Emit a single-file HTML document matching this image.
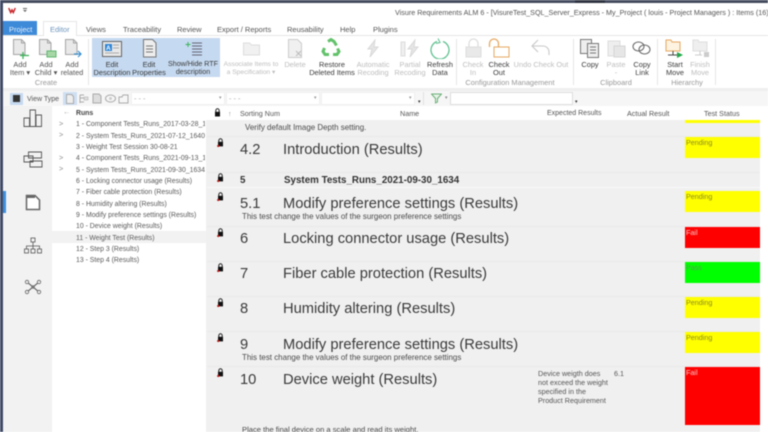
<!DOCTYPE html>
<html><head><meta charset="utf-8"><style>
html,body{margin:0;padding:0;background:#fff}
#p{position:relative;width:768px;height:432px;overflow:hidden;background:#fff;font-family:"Liberation Sans",sans-serif;color:#555;filter:blur(.45px)}
#p div,#p svg{position:absolute}
.t{white-space:nowrap;font-size:7.4px;line-height:7.5px}
.c{text-align:center;transform:translateX(-50%)}
.g{color:#bdbdbd}
.d{color:#3a3a3a}
.tab{font-size:7.5px;top:25px;color:#555;white-space:nowrap}
.tr{font-size:6.9px;left:76px;color:#5a5a5a;white-space:nowrap;margin-top:2px}
.n{font-size:14.7px;color:#3a3a3a;white-space:nowrap;left:240px;margin-top:1.5px}
.h{font-size:14.7px;color:#3a3a3a;white-space:nowrap;left:283px;margin-top:1.5px}
.s{left:685px;width:75px;font-size:7.2px;line-height:11px;text-indent:1px}
.sm{font-size:7.95px;color:#4a4a4a;white-space:nowrap}
.hd{font-size:7.2px;line-height:9px;color:#555;top:109px;white-space:nowrap}
.sep{background:#e6e6e6;width:1px;top:39px;height:46px}
.r{left:207px;width:553px;height:1px;background:#eaeaea}
.lk{left:217px;width:7px;height:9px}
</style></head><body><div id="p">
<svg width="0" height="0" style="position:absolute"><defs>
<g id="lock"><path d="M1.8 4V2.500a1.700 1.700 0 0 1 3.400 0V4" fill="none" stroke="#222" stroke-width="1"/><rect x="1" y="3.800" width="5" height="4.600" fill="#111"/><circle cx="1.200" cy="8" r="1.100" fill="#c01515"/></g>
<g id="doc"><path d="M.5.500h8l3.500 3.500v11.500H.5z" fill="#e9e9e9" stroke="#a5a5a5"/><path d="M8.500.5V4H12" fill="none" stroke="#a5a5a5"/></g>
</defs></svg>

<div style="left:0;top:0;width:768px;height:3px;background:#444b5f"></div>
<div style="left:575px;top:0;width:30px;height:3px;background:#2f3440"></div>
<div style="left:0;top:0;width:3px;height:432px;background:#3f4a66"></div>
<svg style="left:8px;top:7px" width="8" height="7"><path d="M.7 1l2 4.500 1.300-2.500 1.300 2.500 2-4.500" fill="none" stroke="#c9282d" stroke-width="1.500"/></svg>
<div style="left:23px;top:8px;width:4px;height:1px;background:#666"></div>
<div style="left:23px;top:10px;border:2px solid transparent;border-top:2.500px solid #666;border-bottom:0"></div>
<div class="t" style="left:395px;top:8px;font-size:7.2px;line-height:9px;color:#555">Visure Requirements ALM 6 - [VisureTest_SQL_Server_Express - My_Project ( louis - Project Managers ) : Items (16) "P</div>

<div style="left:3px;top:21px;width:34px;height:15px;background:#3d8ad9"></div>
<div class="tab" style="left:9px;color:#e8f1fb">Project</div>
<div style="left:43px;top:21px;width:34px;height:15px;background:#fff;border:1px solid #e6e6e6;border-bottom:0;box-sizing:border-box"></div>
<div class="tab" style="left:50px;color:#6d96bd">Editor</div>
<div class="tab" style="left:86px">Views</div>
<div class="tab" style="left:123px">Traceability</div>
<div class="tab" style="left:177px">Review</div>
<div class="tab" style="left:217px">Export / Reports</div>
<div class="tab" style="left:287px">Reusability</div>
<div class="tab" style="left:340px">Help</div>
<div class="tab" style="left:373px">Plugins</div>
<div style="left:3px;top:35px;width:765px;height:1px;background:#e6e6e6"></div>
<div style="left:44px;top:35px;width:32px;height:1px;background:#fff"></div>

<!-- ribbon -->
<div style="left:92px;top:38px;width:128px;height:39px;background:#c5d9f0"></div>
<div style="left:3px;top:88px;width:765px;height:3px;background:#efefef"></div>

<svg style="left:13px;top:39px" width="18" height="20"><use href="#doc"/><path d="M10 13v7M7 16.500h9" stroke="#3cb45a" stroke-width="1.300"/></svg>
<svg style="left:39px;top:39px" width="18" height="20"><use href="#doc"/><rect x="8" y="12" width="9" height="6" fill="#a6d8a6" stroke="#5fb56f"/></svg>
<svg style="left:65px;top:39px" width="18" height="20"><use href="#doc"/><path d="M9 15h7m-3-3l3 3-3 3" fill="none" stroke="#3b8fd0" stroke-width="1.200"/></svg>
<div class="t c" style="left:20px;top:61px">Add<br>Item ▾</div>
<div class="t c" style="left:46px;top:61px">Add<br>Child ▾</div>
<div class="t c" style="left:72px;top:61px">Add<br>related</div>
<div class="t c" style="left:46px;top:79px;color:#999">Create</div>
<div class="sep" style="left:88px"></div>

<svg style="left:102px;top:41px" width="20" height="16"><rect x=".5" y=".5" width="19" height="15" fill="#e8e8e8" stroke="#666"/><rect x="3" y="3" width="7" height="7" fill="#2f86d6"/><text x="4" y="9" font-size="6.500" font-weight="bold" font-family="Liberation Sans" fill="#fff">A</text><path d="M11 4h6M11 7h6M3 12h14" stroke="#aaa"/></svg>
<svg style="left:143px;top:39px" width="14" height="19"><path d="M.5.500h9l3.500 3.500v14H.5z" fill="#eee" stroke="#777"/><path d="M3 7h7M3 10h7M3 13h7" stroke="#777"/></svg>
<svg style="left:185px;top:41px" width="18" height="15"><path d="M7 2h10M7 5h10M7 8h10M7 11h10M7 14h10" stroke="#667"/><path d="M3 1v5M.5 3.500h5" stroke="#3cb45a"/></svg>
<div class="t c d" style="left:112px;top:61px">Edit<br>Description</div>
<div class="t c d" style="left:149px;top:61px">Edit<br>Properties</div>
<div class="t c d" style="left:193px;top:61px;font-size:7.1px">Show/Hide RTF<br>description</div>

<svg style="left:243px;top:41px" width="18" height="17"><path d="M.5 2h6l2 2h8v10H.5z" fill="#f1f1f1" stroke="#ddd"/></svg>
<div class="t c g" style="left:251px;top:61px;font-size:6.700px">Associate Items to<br>a Specification ▾</div>
<svg style="left:288px;top:39px" width="15" height="19"><path d="M.5.500h9l4 4v14H.5z" fill="#f0f0f0" stroke="#ccc"/><path d="M8 12l5 5m0-5l-5 5" stroke="#bbb"/></svg>
<div class="t c g" style="left:295px;top:61px">Delete</div>
<svg style="left:321px;top:38px" width="20" height="20"><path d="M7 3.500l3-2 3 2 2.500 4M16.500 10.500l1.500 3-2 3h-4M8 16.500H4l-2-3 1.500-3.500" fill="none" stroke="#62c26a" stroke-width="3"/></svg>
<div class="t c d" style="left:332px;top:61px">Restore<br>Deleted Items</div>
<svg style="left:366px;top:39px" width="14" height="19"><path d="M9 1L2 10h4l-2 8 8-10H8z" fill="#e6e6e6" stroke="#d8d8d8"/></svg>
<div class="t c g" style="left:373px;top:61px">Automatic<br>Recoding</div>
<svg style="left:400px;top:39px" width="20" height="19"><path d="M1 3h4v14H1z" fill="#eee" stroke="#ddd"/><path d="M15 1L8 10h4l-2 8 8-10h-4z" fill="#e6e6e6" stroke="#d8d8d8"/></svg>
<div class="t c g" style="left:410px;top:61px">Partial<br>Recoding</div>
<svg style="left:430px;top:38px" width="21" height="21"><path d="M7 3.500a9 9 0 1 0 6 0" fill="none" stroke="#5bbf8d" stroke-width="1.200"/><path d="M8 .5l2 4-4 1" fill="none" stroke="#5bbf8d"/></svg>
<div class="t c d" style="left:440px;top:61px">Refresh<br>Data</div>
<div class="sep" style="left:456px"></div>

<svg style="left:465px;top:38px" width="18" height="20"><rect x="1" y="9" width="15" height="10" fill="#e9e9e9" stroke="#ddd"/><path d="M4 9V5.500a4.500 4.500 0 0 1 9 0V9" fill="none" stroke="#ddd" stroke-width="1.300"/></svg>
<div class="t c g" style="left:473px;top:61px">Check<br>In</div>
<svg style="left:488px;top:38px" width="22" height="20"><rect x="6" y="9" width="15" height="10" fill="#fff" stroke="#e5a862"/><path d="M1.500 9V5.500a4.500 4.500 0 0 1 9 0V9" fill="none" stroke="#e5a862" stroke-width="1.300"/></svg>
<div class="t c d" style="left:499px;top:61px">Check<br>Out</div>
<svg style="left:531px;top:39px" width="20" height="18"><path d="M7 1L1 7l6 6M1 7h11a6 6 0 0 1 6 6v3" fill="none" stroke="#c8c8c8" stroke-width="1.100"/></svg>
<div class="t c g" style="left:541px;top:61px">Undo Check Out</div>
<div class="t c" style="left:510px;top:79px;color:#999">Configuration Management</div>
<div class="sep" style="left:573px"></div>

<svg style="left:580px;top:39px" width="20" height="19"><rect x=".5" y=".5" width="11" height="14" fill="#eee" stroke="#777"/><rect x="7.500" y="4.500" width="11" height="14" fill="#eee" stroke="#777"/><path d="M10 8h6M10 11h6M10 14h6" stroke="#777"/></svg>
<div class="t c d" style="left:590px;top:61px">Copy</div>
<svg style="left:607px;top:39px" width="19" height="19"><rect x="1" y="2" width="12" height="15" fill="#eee" stroke="#ddd"/><rect x="7" y="7" width="11" height="11" fill="#e6e6e6" stroke="#d5d5d5"/></svg>
<div class="t c g" style="left:616px;top:61px">Paste<br>-</div>
<svg style="left:632px;top:41px" width="19" height="14"><ellipse cx="6.500" cy="5.500" rx="5.500" ry="4.500" fill="none" stroke="#666"/><ellipse cx="12.500" cy="8.500" rx="5.500" ry="4.500" fill="none" stroke="#666"/></svg>
<div class="t c d" style="left:642px;top:61px">Copy<br>Link</div>
<div class="t c" style="left:616px;top:79px;color:#999">Clipboard</div>
<div class="sep" style="left:657px"></div>

<svg style="left:665px;top:39px" width="20" height="19"><path d="M1 1h5l1 2h8v9H1z" fill="#fdf3e0" stroke="#e5a862"/><path d="M8 12v4M3 16h10" stroke="#444"/><path d="M12 13l6 3-6 3z" fill="#22a84a"/></svg>
<div class="t c d" style="left:675px;top:61px">Start<br>Move</div>
<svg style="left:692px;top:39px" width="18" height="19"><path d="M1 1h5l1 2h8v9H1z" fill="#efefef" stroke="#ddd"/><path d="M8 12v4M3 16h7" stroke="#ccc"/><rect x="12" y="13" width="5" height="5" fill="#ccc"/></svg>
<div class="t c g" style="left:700px;top:61px">Finish<br>Move</div>
<div class="t c" style="left:687px;top:79px;color:#999">Hierarchy</div>
<div class="sep" style="left:715px"></div>

<!-- toolbar -->
<div style="left:3px;top:91px;width:765px;height:15px;background:#f6f6f6"></div>
<div style="left:10px;top:93px;width:13px;height:12px;background:#c5d9f0"></div>
<div style="left:13px;top:95px;width:7px;height:7px;background:#333"></div>
<div class="t" style="left:27px;top:96px;color:#555;font-size:7px">View Type</div>
<div style="left:63px;top:92px;width:14px;height:13px;background:#cfe0f3"></div>
<svg style="left:66px;top:94px" width="8" height="10"><path d="M.5.500h5l2 2v7H.5z" fill="#eee" stroke="#aaa"/></svg>
<svg style="left:79px;top:94px" width="10" height="10"><path d="M1 1h4M1 1v8M1 4h4M1 8h4" stroke="#aaa" fill="none"/><rect x="5" y="3" width="4" height="3" fill="#ddd" stroke="#aaa" stroke-width=".5"/></svg>
<svg style="left:92px;top:93px" width="10" height="11"><path d="M1 1h6l2 2v7H1z" fill="#ddd" stroke="#aaa"/></svg>
<svg style="left:105px;top:94px" width="11" height="9"><ellipse cx="5.500" cy="4.500" rx="5" ry="3.500" fill="none" stroke="#aaa"/><circle cx="5.500" cy="4.500" r="1.500" fill="#ccc"/></svg>
<svg style="left:118px;top:93px" width="11" height="11"><path d="M1 4h3l1-2h5v8H1z" fill="none" stroke="#aaa"/></svg>
<div style="left:131px;top:92px;width:94px;height:13px;background:#fff;border:1px solid #f0f0f0;box-sizing:border-box"></div>
<div class="t" style="left:134px;top:95px;color:#aaa">- - -</div>
<div class="t" style="left:219px;top:95px;color:#999;font-size:5px">▾</div>
<div style="left:226px;top:92px;width:94px;height:13px;background:#fff;border:1px solid #f0f0f0;box-sizing:border-box"></div>
<div class="t" style="left:229px;top:95px;color:#aaa">- - -</div>
<div class="t" style="left:314px;top:95px;color:#999;font-size:5px">▾</div>
<div style="left:321px;top:92px;width:94px;height:13px;background:#fff;border:1px solid #f0f0f0;box-sizing:border-box"></div>
<div class="t" style="left:409px;top:95px;color:#999;font-size:5px">▾</div>
<div style="left:423px;top:92px;width:1px;height:13px;background:#e2e2e2"></div>
<div class="t" style="left:418px;top:99px;color:#333;font-size:5px">▾</div>
<svg style="left:431px;top:93px" width="11" height="11"><path d="M.5 1h10L6.500 5.500V9L4.500 10V5.500z" fill="#e8f3e8" stroke="#6db07a"/></svg>
<div class="t" style="left:445px;top:95px;color:#888;font-size:5px">▾</div>
<div style="left:450px;top:92px;width:123px;height:13px;background:#fff;border:1px solid #ddd;box-sizing:border-box"></div>
<div class="t" style="left:575px;top:99px;color:#333;font-size:5px">▾</div>

<!-- sidebar -->
<div style="left:3px;top:106px;width:49px;height:326px;background:#f2f2f2"></div>
<div style="left:3px;top:191px;width:3px;height:22px;background:#3f8fdc"></div>
<svg style="left:23px;top:109px" width="20" height="18"><path d="M1 9h5.500v8.500H1zM7 1h5.500v16.500H7zM13 6h5.500v11.500H13z" fill="none" stroke="#555" stroke-width=".9"/></svg>
<svg style="left:23px;top:151px" width="20" height="17"><path d="M5.500 1h13v6h-13zM1 5h9v6H1zM7 10h12v6H7z" fill="#f2f2f2" stroke="#555" stroke-width=".9"/></svg>
<svg style="left:25px;top:194px" width="16" height="17"><path d="M1.500 1.500h8.500l4.500 4.500v9.500h-13z" fill="#fff" stroke="#666" stroke-width="1.500"/><path d="M1 1h9v3H1z" fill="#666"/></svg>
<svg style="left:23px;top:237px" width="20" height="17"><path d="M10 5v4M3.500 12V9h13v3M10 9v3" fill="none" stroke="#555" stroke-width=".8"/><rect x="8" y="1" width="4" height="4" fill="none" stroke="#555" stroke-width=".8"/><rect x="1.500" y="12" width="4" height="4" fill="none" stroke="#555" stroke-width=".8"/><rect x="8" y="12" width="4" height="4" fill="none" stroke="#555" stroke-width=".8"/><rect x="14.500" y="12" width="4" height="4" fill="none" stroke="#555" stroke-width=".8"/></svg>
<svg style="left:24px;top:279px" width="18" height="16"><path d="M3 3l12 10M15 3L3 13" stroke="#555" stroke-width="1.100"/><circle cx="9" cy="8" r="1.800" fill="#777"/><circle cx="3" cy="3" r="1.700" fill="#eee" stroke="#666" stroke-width=".8"/><circle cx="15" cy="3" r="1.700" fill="#eee" stroke="#666" stroke-width=".8"/><circle cx="3" cy="13" r="1.700" fill="#eee" stroke="#666" stroke-width=".8"/><circle cx="15" cy="13" r="1.700" fill="#eee" stroke="#666" stroke-width=".8"/></svg>

<!-- tree -->
<div style="left:52px;top:231px;width:154px;height:12px;background:#f2f2f2"></div>
<div class="t" style="left:63px;top:108px;color:#aaa">←</div>
<div class="tr" style="top:108px;color:#444;font-weight:bold">Runs</div>
<div class="tr" style="top:119px;width:129px;overflow:hidden">1 - Component Tests_Runs_2017-03-28_1634</div>
<div class="tr" style="top:131px">2 - System Tests_Runs_2021-07-12_1640</div>
<div class="tr" style="top:142px">3 - Weight Test Session 30-08-21</div>
<div class="tr" style="top:153px;width:129px;overflow:hidden">4 - Component Tests_Runs_2021-09-13_1634</div>
<div class="tr" style="top:165px">5 - System Tests_Runs_2021-09-30_1634</div>
<div class="tr" style="top:176px">6 - Locking connector usage (Results)</div>
<div class="tr" style="top:187px">7 - Fiber cable protection (Results)</div>
<div class="tr" style="top:199px">8 - Humidity altering (Results)</div>
<div class="tr" style="top:210px">9 - Modify preference settings (Results)</div>
<div class="tr" style="top:221px">10 - Device weight (Results)</div>
<div class="tr" style="top:233px">11 - Weight Test (Results)</div>
<div class="tr" style="top:244px">12 - Step 3 (Results)</div>
<div class="tr" style="top:255px">13 - Step 4 (Results)</div>
<div class="t" style="left:59px;top:120px;color:#888">&gt;</div>
<div class="t" style="left:59px;top:131px;color:#888">&gt;</div>
<div class="t" style="left:59px;top:154px;color:#888">&gt;</div>
<div class="t" style="left:59px;top:165px;color:#888">&gt;</div>

<!-- grid -->
<div style="left:206px;top:106px;width:554px;height:326px;background:#f0f0f0"></div>
<div style="left:206px;top:106px;width:562px;height:14px;background:#fff"></div>
<svg style="left:214px;top:108px;width:7px;height:9px" viewBox="0 0 7 9"><path d="M1.800 4V2.500a1.700 1.700 0 0 1 3.400 0V4" fill="none" stroke="#222"/><rect x="1" y="3.800" width="5" height="4.700" fill="#111"/></svg>
<div class="hd" style="left:228px;color:#999">↑</div>
<div class="hd" style="left:240px">Sorting Num</div>
<div class="hd" style="left:400px">Name</div>
<div class="hd" style="left:547px;font-size:7px">Expected Results</div>
<div class="hd" style="left:627px">Actual Result</div>
<div class="hd" style="left:704px">Test Status</div>

<div style="left:685px;top:120px;width:75px;height:3px;background:#ff0"></div>
<div class="sm" style="left:245px;top:123px">Verify default Image Depth setting.</div>
<div class="r" style="top:136px"></div>
<svg class="lk" style="top:138px"><use href="#lock"/></svg>
<div class="n" style="top:140px">4.2</div>
<div class="h" style="top:140px">Introduction (Results)</div>
<div class="s" style="top:137px;height:21px;background:#ff0;color:#8a8a20">Pending</div>
<div class="r" style="top:172px"></div>
<svg class="lk" style="top:173px"><use href="#lock"/></svg>
<div style="left:240px;top:174.500px;font-size:9.800px;font-weight:bold;color:#333;white-space:nowrap">5</div>
<div style="left:284px;top:174.500px;font-size:9.800px;font-weight:bold;color:#333;white-space:nowrap">System Tests_Runs_2021-09-30_1634</div>
<div class="r" style="top:187px;background:#f8f8f8"></div>
<svg class="lk" style="top:192px"><use href="#lock"/></svg>
<div class="n" style="top:194px">5.1</div>
<div class="h" style="top:194px">Modify preference settings (Results)</div>
<div class="s" style="top:191px;height:21px;background:#ff0;color:#8a8a20">Pending</div>
<div class="sm" style="left:242px;top:212px">This test change the values of the surgeon preference settings</div>
<div class="r" style="top:226px"></div>
<svg class="lk" style="top:228px"><use href="#lock"/></svg>
<div class="n" style="top:229px">6</div>
<div class="h" style="top:229px">Locking connector usage (Results)</div>
<div class="s" style="top:227px;height:21px;background:#f00;color:#f3c9c9">Fail</div>
<div class="r" style="top:261px"></div>
<svg class="lk" style="top:263px"><use href="#lock"/></svg>
<div class="n" style="top:264px">7</div>
<div class="h" style="top:264px">Fiber cable protection (Results)</div>
<div class="s" style="top:262px;height:21px;background:#0f0;color:#5a9a5a">Pass</div>
<div class="r" style="top:296px"></div>
<svg class="lk" style="top:298px"><use href="#lock"/></svg>
<div class="n" style="top:299px">8</div>
<div class="h" style="top:299px">Humidity altering (Results)</div>
<div class="s" style="top:297px;height:21px;background:#ff0;color:#8a8a20">Pending</div>
<div class="r" style="top:331px"></div>
<svg class="lk" style="top:333px"><use href="#lock"/></svg>
<div class="n" style="top:335px">9</div>
<div class="h" style="top:335px">Modify preference settings (Results)</div>
<div class="s" style="top:332px;height:21px;background:#ff0;color:#8a8a20">Pending</div>
<div class="sm" style="left:242px;top:353px">This test change the values of the surgeon preference settings</div>
<div class="r" style="top:366px"></div>
<svg class="lk" style="top:368px"><use href="#lock"/></svg>
<div class="n" style="top:370px">10</div>
<div class="h" style="top:370px">Device weight (Results)</div>
<div class="t" style="left:538px;top:369px;line-height:9px;font-size:7.200px;color:#555">Device weigth does<br>not exceed the weight<br>specified in the<br>Product Requirement</div>
<div class="t" style="left:614px;top:369px;line-height:9px;font-size:7.200px;color:#555">6.1</div>
<div class="s" style="top:367px;height:58px;background:#f00;color:#f3c9c9">Fail</div>
<div class="sm" style="left:242px;top:425px;font-size:7.600px">Place the final device on a scale and read its weight.</div>
</div></body></html>
